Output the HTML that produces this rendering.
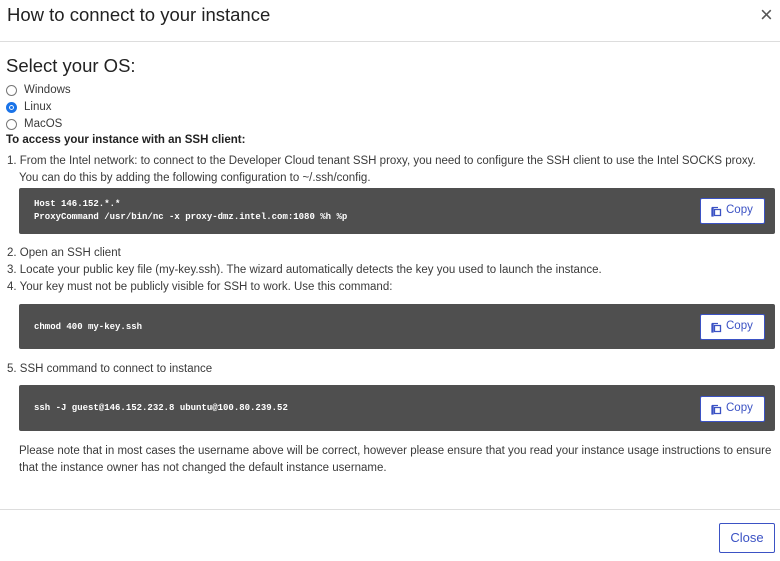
<!DOCTYPE html>
<html><head><style>
body{margin:0;width:780px;height:561px;background:#fff;font-family:"Liberation Sans",sans-serif;color:#2b2b2b;position:relative;overflow:hidden}
.a{position:absolute;white-space:nowrap}
.t{font-size:11.5px;color:#3a3a3a}
.code{position:absolute;left:19px;width:756px;background:#4f4f4f;border-radius:2px}
.code pre{margin:0;position:absolute;left:15px;font-family:"Liberation Mono",monospace;font-size:9px;color:#fff;line-height:13px;font-weight:bold}
.copy{position:absolute;left:681px;width:65px;height:26px;background:#fff;border:1px solid #3b52c4;border-radius:2px;color:#3b52c4;font-size:11.5px;box-sizing:border-box}
.copy svg{position:absolute;left:10px;top:7px}
.copy span{position:absolute;left:25px;top:5px}
.r{position:absolute;left:6px;width:11px;height:11px;border:1px solid #777;border-radius:50%;box-sizing:border-box}
</style></head><body>
<div class="a" style="left:7px;top:4px;font-size:18.5px;color:#222">How to connect to your instance</div>
<div class="a" style="left:760px;top:2px;font-size:22px;color:#555">×</div>
<div style="position:absolute;left:0;top:41px;width:780px;height:1px;background:#ddd"></div>
<div class="a" style="left:6px;top:55px;font-size:18.5px;color:#222">Select your OS:</div>
<div class="r" style="top:85px"></div><div class="a t" style="left:24px;top:84px">Windows</div>
<div class="r" style="top:102px;border:3px solid #1a73e8;background:#1a73e8;box-shadow:inset 0 0 0 1px #fff"></div><div class="a t" style="left:24px;top:101px">Linux</div>
<div class="r" style="top:119px"></div><div class="a t" style="left:24px;top:118px">MacOS</div>
<div class="a" style="left:6px;top:134px;font-size:11.5px;font-weight:bold;color:#222">To access your instance with an SSH client:</div>
<div class="a t" style="left:7px;top:155px">1. From the Intel network: to connect to the Developer Cloud tenant SSH proxy, you need to configure the SSH client to use the Intel SOCKS proxy.</div>
<div class="a t" style="left:19px;top:172px">You can do this by adding the following configuration to ~/.ssh/config.</div>
<div class="code" style="top:188px;height:46px"><pre style="top:10px">Host 146.152.*.*
ProxyCommand /usr/bin/nc -x proxy-dmz.intel.com:1080 %h %p</pre>
<div class="copy" style="top:10px"><svg width="11" height="11" viewBox="0 0 11 11"><path d="M1 2v8h1V2zM3.5 3.5h6v6h-6z" fill="none" stroke="#3b52c4" stroke-width="1.3"/><path d="M1 1.5h6" stroke="#3b52c4" stroke-width="1.2"/></svg><span>Copy</span></div></div>
<div class="a t" style="left:7px;top:247px">2. Open an SSH client</div>
<div class="a t" style="left:7px;top:264px">3. Locate your public key file (my-key.ssh). The wizard automatically detects the key you used to launch the instance.</div>
<div class="a t" style="left:7px;top:281px">4. Your key must not be publicly visible for SSH to work. Use this command:</div>
<div class="code" style="top:304px;height:45px"><pre style="top:17px">chmod 400 my-key.ssh</pre>
<div class="copy" style="top:10px"><svg width="11" height="11" viewBox="0 0 11 11"><path d="M1 2v8h1V2zM3.5 3.5h6v6h-6z" fill="none" stroke="#3b52c4" stroke-width="1.3"/><path d="M1 1.5h6" stroke="#3b52c4" stroke-width="1.2"/></svg><span>Copy</span></div></div>
<div class="a t" style="left:7px;top:363px">5. SSH command to connect to instance</div>
<div class="code" style="top:385px;height:46px"><pre style="top:17px">ssh -J guest@146.152.232.8 ubuntu@100.80.239.52</pre>
<div class="copy" style="top:11px"><svg width="11" height="11" viewBox="0 0 11 11"><path d="M1 2v8h1V2zM3.5 3.5h6v6h-6z" fill="none" stroke="#3b52c4" stroke-width="1.3"/><path d="M1 1.5h6" stroke="#3b52c4" stroke-width="1.2"/></svg><span>Copy</span></div></div>
<div class="a t" style="left:19px;top:445px">Please note that in most cases the username above will be correct, however please ensure that you read your instance usage instructions to ensure</div>
<div class="a t" style="left:19px;top:462px">that the instance owner has not changed the default instance username.</div>
<div style="position:absolute;left:0;top:509px;width:780px;height:1px;background:#ddd"></div>
<div style="position:absolute;left:719px;top:523px;width:56px;height:30px;border:1px solid #3b52c4;border-radius:2px;box-sizing:border-box;color:#3b52c4;font-size:13px;text-align:center;line-height:28px">Close</div>
</body></html>
